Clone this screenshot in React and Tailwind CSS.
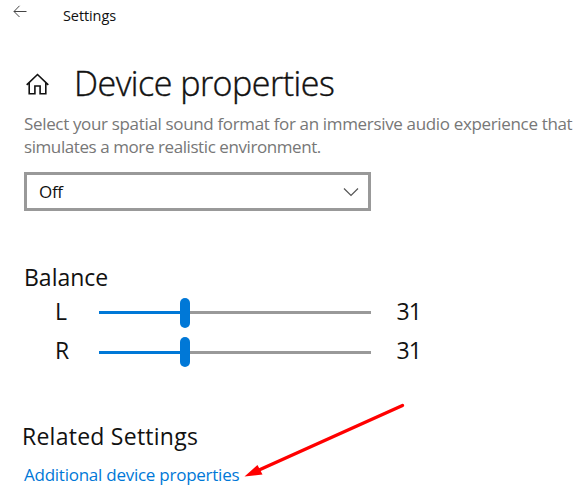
const channels = [
  { name: "L", value: 31 },
  { name: "R", value: 31 },
];

const BackIcon = () => (
  <svg className="h-[14px] w-[14px]" viewBox="0 0 14 14" fill="none" stroke="#444" strokeWidth="1">
    <path d="M13.500 6.500H1M6.500 0.800L1 6.500l5.500 5.500" />
  </svg>
);

const HomeIcon = () => (
  <svg className="h-[24px] w-[24px]" viewBox="0 0 24 24" fill="none" stroke="#111" strokeWidth="1.6">
    <path d="M1.700 12.800L12.500 2.500l10.800 10.300M4.200 10.500v11.200h5.700v-7.700h5.200v7.700h5.700V10.500" />
  </svg>
);

const ChevronIcon = () => (
  <svg className="h-[10px] w-[16px]" viewBox="0 0 16 10" fill="none" stroke="#555" strokeWidth="1.2">
    <path d="M1 1.500l7 7 7-7" />
  </svg>
);

const ChannelSlider = ({ name, value }) => {
  return (
    <div className="flex h-[39.5px] items-center">
      <span className="w-[74.500px] pb-[4px] pl-[31px] text-[23px] leading-[32px]">{name}</span>
      <div className="flex w-[272px] items-center">
        <div className="h-[3px] bg-[#0078d7]" style={{ width: (value - 1) + "%" }} />
        <div className="h-[30px] w-[10px] shrink-0 rounded-full bg-[#0078d7]" />
        <div className="h-[3px] flex-1 bg-[#999]" />
      </div>
      <span className="pb-[4px] pl-[26px] text-[23px] leading-[32px] tracking-[-1px]">{value}</span>
    </div>
  );
};

export default function App() {
  return (
    <div className="relative h-[489px] w-[585px] overflow-hidden bg-white font-['Open_Sans',sans-serif] text-[#111]">
      <header className="flex h-[26px] pt-[5px] pl-[13px]">
        <BackIcon />
        <span className="pl-[36px] text-[14.5px] leading-[22px] tracking-[-0.1px]">Settings</span>
      </header>

      <div className="flex h-[86px] items-start pt-[37px] pl-[25px]">
        <div className="pt-[9px]">
          <HomeIcon />
        </div>
        <h1 className="pl-[25px] text-[34px] leading-[40px] font-light tracking-[-0.5px] whitespace-nowrap [-webkit-text-stroke:0.4px_#111]">
          Device properties
        </h1>
      </div>

      <main className="pl-[24px]">
        <p className="text-[17px] leading-[23px] tracking-[-0.34px] whitespace-nowrap text-[#777]">
          Select your spatial sound format for an immersive audio experience that
          <br />
          <span className="tracking-[-0.42px]">simulates a more realistic environment.</span>
        </p>

        <button className="mt-[14px] flex h-[39px] w-[347px] items-center justify-between border-[3px] border-[#999] pr-[9px] pl-[12px] text-[17px] tracking-[-0.3px]">
          <span>Off</span>
          <ChevronIcon />
        </button>

        <h2 className="mt-[50px] text-[23px] leading-[32px]">Balance</h2>
        {channels.map((channel) => (
          <ChannelSlider key={channel.name} name={channel.name} value={channel.value} />
        ))}

        <h2 className="mt-[48px] -ml-[2px] text-[23px] leading-[32px] tracking-[0.25px]">Related Settings</h2>
        <a className="mt-[11px] block text-[17px] leading-[24px] tracking-[-0.25px] text-[#0078d7]">Additional device properties</a>
      </main>

      {/* pointer to the link */}
      <svg className="absolute top-[395px] left-[235px] h-[94px] w-[180px]" viewBox="0 0 180 94">
        <path d="M167.500 10.500L24 75" stroke="#f00" strokeWidth="3.4" strokeLinecap="round" />
        <path d="M9.500 81.500L22.500 70l5 9.500z" fill="#f00" />
      </svg>
    </div>
  );
}
